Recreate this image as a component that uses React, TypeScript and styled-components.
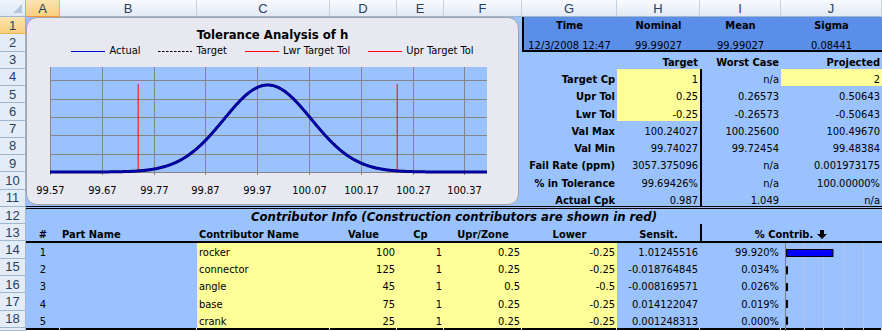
import { Fragment } from 'react'
import styled, { createGlobalStyle, css } from 'styled-components'

const BLUE = '#99c2ff'
const DARK_BLUE = '#5a8ee8'
const YELLOW = '#ffff99'
const LINE = '#000'

const GlobalStyle = createGlobalStyle`
  html, body {
    margin: 0;
    padding: 0;
    background: #ffffff;
    overflow: hidden;
  }
`

const columnWidths = [34, 137, 133, 67, 47, 78, 95, 83, 81, 101]
const columnLetters = ['A', 'B', 'C', 'D', 'E', 'F', 'G', 'H', 'I', 'J']

const Sheet = styled.div`
  position: relative;
  display: grid;
  grid-template-columns: 26px ${columnWidths.map((w) => `${w}px`).join(' ')};
  grid-template-rows: 17px repeat(18, 17.28px) 1fr;
  width: 882px;
  height: 331px;
  overflow: hidden;
  background: #ffffff;
  font-family: 'DejaVu Sans Condensed', 'DejaVu Sans', sans-serif;
  font-size: 11px;
  color: #000;
`

const headerFace = css`
  display: flex;
  align-items: center;
  justify-content: center;
  box-sizing: border-box;
  overflow: hidden;
  font-family: 'Liberation Sans', Arial, sans-serif;
  font-size: 13px;
  color: #29405e;
`

const SelectAll = styled.div`
  position: relative;
  box-sizing: border-box;
  background: linear-gradient(#f1f5fb, #dde7f4);
  border-right: 1px solid #9eb6ce;
  border-bottom: 1px solid #9eb6ce;

  &::after {
    content: '';
    position: absolute;
    right: 3px;
    bottom: 3px;
    border-style: solid;
    border-width: 0 0 9px 9px;
    border-color: transparent transparent #b6c6dc transparent;
  }
`

const ColumnHeader = styled.div<{ $active?: boolean }>`
  ${headerFace}
  background: ${({ $active }) =>
    $active ? 'linear-gradient(#fbe4b0, #f8cf7d)' : 'linear-gradient(#f8fafd, #e3eaf5)'};
  border-right: 1px solid ${({ $active }) => ($active ? '#f2b44e' : '#c3d1e3')};
  border-bottom: 1px solid ${({ $active }) => ($active ? '#f29536' : '#9eb6ce')};
`

const RowHeader = styled.div<{ $active?: boolean }>`
  ${headerFace}
  grid-column: 1;
  background: ${({ $active }) => ($active ? 'linear-gradient(#fbe4b0, #f8cf7d)' : '#e4ecf7')};
  border-right: 1px solid ${({ $active }) => ($active ? '#f29536' : '#9eb6ce')};
  border-bottom: 1px solid ${({ $active }) => ($active ? '#f2b44e' : '#9eb6ce')};
`

type Fill = 'blue' | 'yellow' | 'dark' | 'white'

const fills: Record<Fill, string> = {
  blue: BLUE,
  yellow: YELLOW,
  dark: DARK_BLUE,
  white: '#ffffff',
}

type CellProps = {
  $fill?: Fill
  $align?: 'left' | 'center' | 'right'
  $bold?: boolean
  $span?: number
  $middle?: boolean
  $top?: number
  $bottom?: number
  $left?: number
}

const edges = ({ $top, $bottom, $left }: CellProps) => {
  const list: string[] = []
  if ($top) list.push(`inset 0 ${$top}px 0 ${LINE}`)
  if ($bottom) list.push(`inset 0 -${$bottom}px 0 ${LINE}`)
  if ($left) list.push(`inset ${$left}px 0 0 ${LINE}`)
  return list.length ? list.join(', ') : 'none'
}

const Cell = styled.div<CellProps>`
  grid-column: span ${({ $span }) => $span ?? 1};
  display: flex;
  align-items: ${({ $middle }) => ($middle ? 'center' : 'flex-end')};
  justify-content: ${({ $align }) =>
    $align === 'right' ? 'flex-end' : $align === 'center' ? 'center' : 'flex-start'};
  min-width: 0;
  padding: 0 2px;
  box-sizing: border-box;
  line-height: 13px;
  white-space: nowrap;
  background: ${({ $fill }) => fills[$fill ?? 'blue']};
  font-weight: ${({ $bold }) => ($bold ? 700 : 400)};
  box-shadow: ${edges};
`

const BlankCell = styled.div`
  background: #ffffff;
  border-right: 1px solid #d0d7e5;
  box-sizing: border-box;
  box-shadow: inset 0 2px 0 ${LINE};
`

const ChartBed = styled.div`
  grid-column: 2 / span 6;
  grid-row: 2 / span 11;
  background: ${BLUE};
  box-shadow: inset 0 -1px 0 ${LINE};
`

const SectionTitle = styled(Cell)`
  font-size: 13px;
  font-style: italic;
  line-height: 14px;
  box-shadow: inset 0 1px 0 ${BLUE}, inset 0 2px 0 ${LINE};
`

const SortArrow = styled.svg`
  margin-left: 4px;
  margin-bottom: 2px;
`

/* tolerance chart, floating over A1:F11 */

const Chart = styled.div`
  position: absolute;
  left: 26px;
  top: 17px;
  width: 493px;
  height: 188px;
  box-sizing: border-box;
  display: flex;
  flex-direction: column;
  align-items: center;
  padding-top: 9px;
  background: #e8e8f0;
  border: 1px solid #a3a3a8;
  border-radius: 11px;
`

const ChartTitle = styled.div`
  font-size: 13px;
  font-weight: 700;
  line-height: 16px;
`

const Legend = styled.div`
  display: flex;
  align-items: center;
  gap: 18px;
  height: 14px;
  margin-top: 1px;
  font-size: 11px;
  line-height: 14px;
`

const LegendItem = styled.span`
  display: flex;
  align-items: center;
  gap: 4px;
`

const PlotArea = styled.svg`
  flex: none;
  display: block;
  font-size: 11px;
`

const ContribBars = styled.svg`
  position: absolute;
  left: 785px;
  top: 243px;
  display: block;
`

const PLOT = { left: 23, right: 460, top: 9, bottom: 114, x0: 99.57, pxPer: 518 }
const MEAN = 99.99027
const SIGMA = 0.08441
const xAt = (v: number) => PLOT.left + (v - PLOT.x0) * PLOT.pxPer
const axisLabels = ['99.57', '99.67', '99.77', '99.87', '99.97', '100.07', '100.17', '100.27', '100.37']

function curvePath() {
  const points: string[] = []
  for (let x = PLOT.left; x <= PLOT.right; x += 1) {
    const v = PLOT.x0 + (x - PLOT.left) / PLOT.pxPer
    const z = (v - MEAN) / SIGMA
    const y = PLOT.bottom - 87 * Math.exp(-0.5 * z * z)
    points.push(`${x},${y.toFixed(2)}`)
  }
  return `M${points.join(' L')}`
}

function LegendKey({ color, dashed }: { color: string; dashed?: boolean }) {
  return (
    <svg width="34" height="3">
      <line
        x1="0"
        y1="1.5"
        x2="34"
        y2="1.5"
        stroke={color}
        strokeWidth="1"
        strokeDasharray={dashed ? '2.5 1.5' : undefined}
      />
    </svg>
  )
}

function ToleranceChart() {
  const gridX = axisLabels.map((_, i) => Math.round(PLOT.left + i * 51.8) + 0.5)
  const gridY = [1, 2, 3, 4, 5].map((k) => Math.round(PLOT.bottom - k * 18.33) + 0.5)

  return (
    <Chart>
      <ChartTitle>Tolerance Analysis of h</ChartTitle>
      <Legend>
        <LegendItem>
          <LegendKey color="#0000e0" />
          Actual
        </LegendItem>
        <LegendItem>
          <LegendKey color="#000" dashed />
          Target
        </LegendItem>
        <LegendItem>
          <LegendKey color="#ff0000" />
          Lwr Target Tol
        </LegendItem>
        <LegendItem>
          <LegendKey color="#ff0000" />
          Upr Target Tol
        </LegendItem>
      </Legend>
      <PlotArea width="491" height="146" viewBox="0 0 491 146">
        <rect
          x={PLOT.left}
          y={PLOT.top}
          width={PLOT.right - PLOT.left}
          height={PLOT.bottom - PLOT.top}
          fill={BLUE}
        />
        {gridY.map((y) => (
          <line key={y} x1={PLOT.left} y1={y} x2={PLOT.right} y2={y} stroke="#858585" />
        ))}
        {gridX.map((x) => (
          <line key={x} x1={x} y1={PLOT.top} x2={x} y2={PLOT.bottom + 3} stroke="#858585" />
        ))}
        <line x1={PLOT.left} y1={PLOT.bottom + 0.5} x2={PLOT.right} y2={PLOT.bottom + 0.5} stroke="#858585" />
        <line x1={xAt(99.74027)} y1="26" x2={xAt(99.74027)} y2={PLOT.bottom} stroke="#ff0000" />
        <line x1={xAt(100.24027)} y1="26" x2={xAt(100.24027)} y2={PLOT.bottom} stroke="#ff0000" />
        <path d={curvePath()} fill="none" stroke="#000060" strokeWidth="3" />
        <path d={curvePath()} fill="none" stroke="#0000c0" strokeWidth="1.6" />
        {axisLabels.map((label, i) => (
          <text key={label} x={gridX[i]} y="136" textAnchor="middle" fill="#000">
            {label}
          </text>
        ))}
      </PlotArea>
    </Chart>
  )
}

const summaryRows = [
  { label: 'Target Cp', target: '1', worst: 'n/a', projected: '2', fixedTarget: true, fixedProjected: true },
  { label: 'Upr Tol', target: '0.25', worst: '0.26573', projected: '0.50643', fixedTarget: true },
  { label: 'Lwr Tol', target: '-0.25', worst: '-0.26573', projected: '-0.50643', fixedTarget: true },
  { label: 'Val Max', target: '100.24027', worst: '100.25600', projected: '100.49670' },
  { label: 'Val Min', target: '99.74027', worst: '99.72454', projected: '99.48384' },
  { label: 'Fail Rate (ppm)', target: '3057.375096', worst: 'n/a', projected: '0.001973175' },
  { label: '% in Tolerance', target: '99.69426%', worst: 'n/a', projected: '100.00000%' },
  { label: 'Actual Cpk', target: '0.987', worst: '1.049', projected: 'n/a' },
]

const contributors = [
  { name: 'rocker', value: '100', cp: '1', upper: '0.25', lower: '-0.25', sensit: '1.01245516', pct: 99.92 },
  { name: 'connector', value: '125', cp: '1', upper: '0.25', lower: '-0.25', sensit: '-0.018764845', pct: 0.034 },
  { name: 'angle', value: '45', cp: '1', upper: '0.5', lower: '-0.5', sensit: '-0.008169571', pct: 0.026 },
  { name: 'base', value: '75', cp: '1', upper: '0.25', lower: '-0.25', sensit: '0.014122047', pct: 0.019 },
  { name: 'crank', value: '25', cp: '1', upper: '0.25', lower: '-0.25', sensit: '0.001248313', pct: 0 },
]

function ContributionBars() {
  return (
    <ContribBars width="97" height="88" viewBox="0 0 97 88">
      <rect x="0" y="0" width="97" height="85" fill={BLUE} />
      {[19.5, 38.5, 58.5, 78.5].map((x) => (
        <line key={x} x1={x} y1="0" x2={x} y2="88" stroke="#b3c6e6" />
      ))}
      <line x1="0.5" y1="0" x2="0.5" y2="88" stroke="#7a7a7a" />
      {contributors.map((c, i) => {
        const y = 6.5 + i * 16.8
        if (c.pct < 1) {
          return <rect key={c.name} x="1" y={y} width="2" height="8" fill="#000" />
        }
        return (
          <rect
            key={c.name}
            x="1.5"
            y={y}
            width={c.pct * 0.465}
            height="7"
            fill="#0000ff"
            stroke="#000"
            strokeWidth="1"
          />
        )
      })}
    </ContribBars>
  )
}

export default function App() {
  return (
    <>
      <GlobalStyle />
      <Sheet>
        <SelectAll />
        {columnLetters.map((letter) => (
          <ColumnHeader key={letter} $active={letter === 'A'}>
            {letter}
          </ColumnHeader>
        ))}

        <RowHeader $active>1</RowHeader>
        <ChartBed />
        <Cell $fill="dark" $align="center" $bold $middle $left={2}>Time</Cell>
        <Cell $fill="dark" $align="center" $bold $middle>Nominal</Cell>
        <Cell $fill="dark" $align="center" $bold $middle>Mean</Cell>
        <Cell $fill="dark" $align="center" $bold $middle>Sigma</Cell>

        <RowHeader>2</RowHeader>
        <Cell $fill="dark" $align="center" $left={2} $bottom={2}>12/3/2008 12:47</Cell>
        <Cell $fill="dark" $align="center" $bottom={2}>99.99027</Cell>
        <Cell $fill="dark" $align="center" $bottom={2}>99.99027</Cell>
        <Cell $fill="dark" $align="center" $bottom={2}>0.08441</Cell>

        <RowHeader>3</RowHeader>
        <Cell />
        <Cell $align="right" $bold>Target</Cell>
        <Cell $align="right" $bold>Worst Case</Cell>
        <Cell $align="right" $bold>Projected</Cell>

        {summaryRows.map((row, i) => {
          const bottom = i === summaryRows.length - 1 ? 1 : 0
          return (
            <Fragment key={row.label}>
              <RowHeader>{i + 4}</RowHeader>
              <Cell $align="right" $bold $bottom={bottom}>{row.label}</Cell>
              <Cell $align="right" $fill={row.fixedTarget ? 'yellow' : 'blue'} $bottom={bottom}>
                {row.target}
              </Cell>
              <Cell $align="right" $left={2} $bottom={bottom}>{row.worst}</Cell>
              <Cell $align="right" $fill={row.fixedProjected ? 'yellow' : 'blue'} $bottom={bottom}>
                {row.projected}
              </Cell>
            </Fragment>
          )
        })}

        <RowHeader>12</RowHeader>
        <SectionTitle $span={10} $align="center" $bold>
          Contributor Info (Construction contributors are shown in red)
        </SectionTitle>

        <RowHeader>13</RowHeader>
        <Cell $align="center" $bold>#</Cell>
        <Cell $bold>Part Name</Cell>
        <Cell $bold>Contributor Name</Cell>
        <Cell $align="center" $bold>Value</Cell>
        <Cell $align="center" $bold>Cp</Cell>
        <Cell $align="center" $bold>Upr/Zone</Cell>
        <Cell $align="center" $bold>Lower</Cell>
        <Cell $align="center" $bold>Sensit.</Cell>
        <Cell $align="center" $bold $span={2} $left={2}>
          % Contrib.
          <SortArrow width="10" height="9" viewBox="0 0 10 9">
            <path d="M3 0 H7 V4 H10 L5 9 L0 4 H3 Z" fill="#000" />
          </SortArrow>
        </Cell>

        {contributors.map((c, i) => {
          const top = i === 0 ? 2 : 0
          return (
            <Fragment key={c.name}>
              <RowHeader>{i + 14}</RowHeader>
              <Cell $align="center" $top={top}>{i + 1}</Cell>
              <Cell $top={top} />
              <Cell $fill="yellow" $top={top}>{c.name}</Cell>
              <Cell $fill="yellow" $align="right" $top={top}>{c.value}</Cell>
              <Cell $fill="yellow" $align="right" $top={top}>{c.cp}</Cell>
              <Cell $fill="yellow" $align="right" $top={top}>{c.upper}</Cell>
              <Cell $fill="yellow" $align="right" $top={top}>{c.lower}</Cell>
              <Cell $align="right" $top={top}>{c.sensit}</Cell>
              <Cell $align="right" $top={top}>{c.pct.toFixed(3)}%</Cell>
              <Cell $top={top} />
            </Fragment>
          )
        })}

        <RowHeader />
        {columnLetters.map((letter) => (
          <BlankCell key={letter} />
        ))}

        <ToleranceChart />
        <ContributionBars />
      </Sheet>
    </>
  )
}
